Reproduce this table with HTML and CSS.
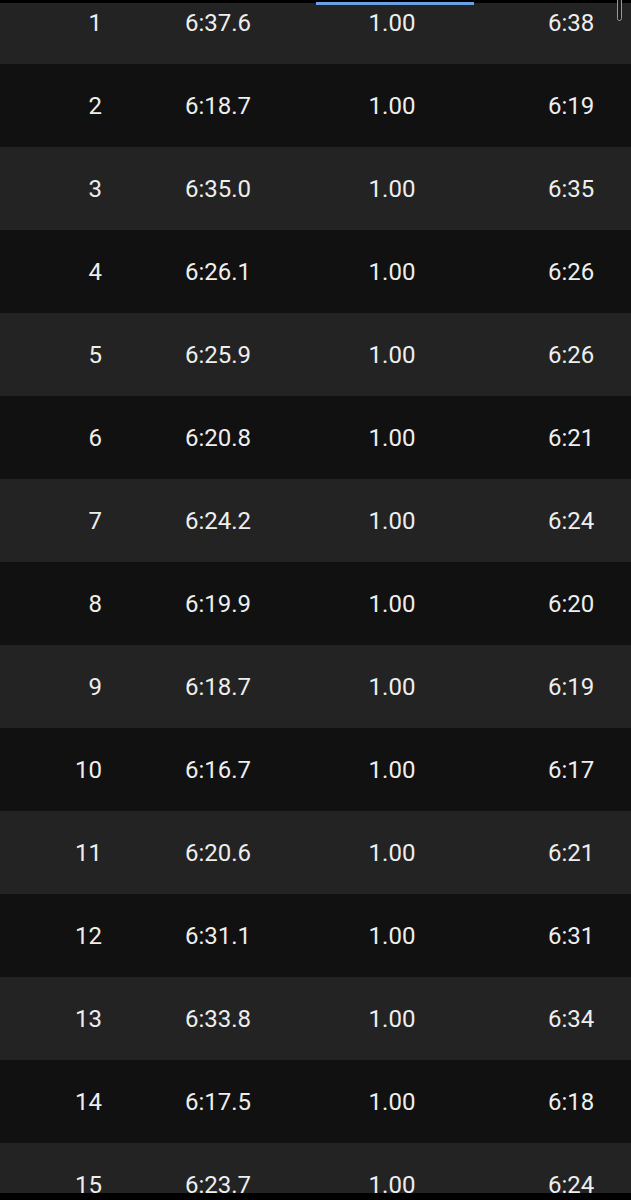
FILE: index.html
```html
<!DOCTYPE html>
<html lang="en">
<head>
<meta charset="utf-8">
<title>Laps</title>
<link rel="stylesheet" href="styles.css">
</head>
<body>
<div class="screen">
  <div class="list">
    <div class="row"><span class="c1">1</span><span class="c2">6:37.6</span><span class="c3">1.00</span><span class="c4">6:38</span></div>
    <div class="row"><span class="c1">2</span><span class="c2">6:18.7</span><span class="c3">1.00</span><span class="c4">6:19</span></div>
    <div class="row"><span class="c1">3</span><span class="c2">6:35.0</span><span class="c3">1.00</span><span class="c4">6:35</span></div>
    <div class="row"><span class="c1">4</span><span class="c2">6:26.1</span><span class="c3">1.00</span><span class="c4">6:26</span></div>
    <div class="row"><span class="c1">5</span><span class="c2">6:25.9</span><span class="c3">1.00</span><span class="c4">6:26</span></div>
    <div class="row"><span class="c1">6</span><span class="c2">6:20.8</span><span class="c3">1.00</span><span class="c4">6:21</span></div>
    <div class="row"><span class="c1">7</span><span class="c2">6:24.2</span><span class="c3">1.00</span><span class="c4">6:24</span></div>
    <div class="row"><span class="c1">8</span><span class="c2">6:19.9</span><span class="c3">1.00</span><span class="c4">6:20</span></div>
    <div class="row"><span class="c1">9</span><span class="c2">6:18.7</span><span class="c3">1.00</span><span class="c4">6:19</span></div>
    <div class="row"><span class="c1">10</span><span class="c2">6:16.7</span><span class="c3">1.00</span><span class="c4">6:17</span></div>
    <div class="row"><span class="c1">11</span><span class="c2">6:20.6</span><span class="c3">1.00</span><span class="c4">6:21</span></div>
    <div class="row"><span class="c1">12</span><span class="c2">6:31.1</span><span class="c3">1.00</span><span class="c4">6:31</span></div>
    <div class="row"><span class="c1">13</span><span class="c2">6:33.8</span><span class="c3">1.00</span><span class="c4">6:34</span></div>
    <div class="row"><span class="c1">14</span><span class="c2">6:17.5</span><span class="c3">1.00</span><span class="c4">6:18</span></div>
    <div class="row"><span class="c1">15</span><span class="c2">6:23.7</span><span class="c3">1.00</span><span class="c4">6:24</span></div>
  </div>
  <div class="top-bar"></div>
  <div class="tab-indicator"></div>
  <div class="scroll-thumb"></div>
  <div class="bottom-bar"></div>
</div>
</body>
</html>
```
FILE: styles.css
```css
html, body {
  margin: 0;
  padding: 0;
  background: #111111;
}

.screen {
  position: relative;
  width: 631px;
  height: 1200px;
  overflow: hidden;
  font-family: Roboto, "Liberation Sans", sans-serif;
  color: #eeeeee;
}

.list {
  margin-top: -19px;
  display: flex;
  flex-direction: column;
}

.row {
  display: grid;
  grid-template-columns: 102px 215px 150px 1fr;
  height: 83px;
  line-height: 84px;
  font-size: 24px;
  background: #111111;
}

.row:nth-child(odd) {
  background: #232323;
}

.c1 {
  text-align: right;
}

.c2 {
  padding-left: 83px;
}

.c3 {
  text-align: center;
}

.c4 {
  padding-left: 81px;
}

.top-bar {
  position: absolute;
  left: 0;
  top: 0;
  width: 631px;
  height: 3px;
  background: #000000;
}

.tab-indicator {
  position: absolute;
  left: 316px;
  top: 2px;
  width: 158px;
  height: 3px;
  background: #6f9fe3;
}

.scroll-thumb {
  position: absolute;
  left: 617px;
  top: -6px;
  width: 3px;
  height: 25px;
  border: 1px solid #9a9a9a;
  border-radius: 3px;
  background: #1a1a1a;
}

.bottom-bar {
  position: absolute;
  left: 0;
  bottom: 0;
  width: 631px;
  height: 7px;
  background: #000000;
}
```
